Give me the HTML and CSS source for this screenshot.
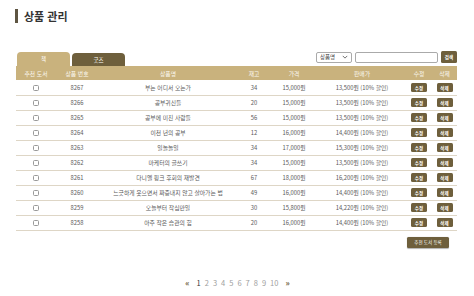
FILE: index.html
```html
<!DOCTYPE html>
<html lang="ko">
<head>
<meta charset="utf-8">
<title>상품 관리</title>
<link rel="stylesheet" href="styles.css">
</head>
<body>
<div class="page">
  <h1 class="title">상품 관리</h1>
  <div class="toolbar">
    <div class="tabs">
      <span class="tab tab-on">책</span>
      <span class="tab tab-off">굿즈</span>
    </div>
    <div class="search">
      <div class="select"><span>상품명</span><svg class="chev" viewBox="0 0 8 5" width="6" height="4"><path d="M1 1 L4 4 L7 1" fill="none" stroke="#444" stroke-width="1"/></svg></div>
      <div class="input"></div>
      <span class="btn btn-search">검색</span>
    </div>
  </div>
  <table class="grid">
    <colgroup>
      <col class="c1"><col class="c2"><col class="c3"><col class="c4"><col class="c5"><col class="c6"><col class="c7"><col class="c8">
    </colgroup>
    <thead>
      <tr><th>추천 도서</th><th>상품 번호</th><th>상품명</th><th>재고</th><th>가격</th><th>판매가</th><th>수정</th><th>삭제</th></tr>
    </thead>
    <tbody>
      <tr><td><span class="cb"></span></td><td>8267</td><td>부는 어디서 오는가</td><td>34</td><td>15,000원</td><td>13,500원 (10% 할인)</td><td><span class="btn">수정</span></td><td><span class="btn">삭제</span></td></tr>
      <tr><td><span class="cb"></span></td><td>8266</td><td>공부귀신들</td><td>20</td><td>15,000원</td><td>13,500원 (10% 할인)</td><td><span class="btn">수정</span></td><td><span class="btn">삭제</span></td></tr>
      <tr><td><span class="cb"></span></td><td>8265</td><td>공부에 미친 사람들</td><td>56</td><td>15,000원</td><td>13,500원 (10% 할인)</td><td><span class="btn">수정</span></td><td><span class="btn">삭제</span></td></tr>
      <tr><td><span class="cb"></span></td><td>8264</td><td>이천 년의 공부</td><td>12</td><td>16,000원</td><td>14,400원 (10% 할인)</td><td><span class="btn">수정</span></td><td><span class="btn">삭제</span></td></tr>
      <tr><td><span class="cb"></span></td><td>8263</td><td>일놀놀일</td><td>34</td><td>17,000원</td><td>15,300원 (10% 할인)</td><td><span class="btn">수정</span></td><td><span class="btn">삭제</span></td></tr>
      <tr><td><span class="cb"></span></td><td>8262</td><td>마케터의 글쓰기</td><td>34</td><td>15,000원</td><td>13,500원 (10% 할인)</td><td><span class="btn">수정</span></td><td><span class="btn">삭제</span></td></tr>
      <tr><td><span class="cb"></span></td><td>8261</td><td>다니엘 핑크 후회의 재발견</td><td>67</td><td>18,000원</td><td>16,200원 (10% 할인)</td><td><span class="btn">수정</span></td><td><span class="btn">삭제</span></td></tr>
      <tr><td><span class="cb"></span></td><td>8260</td><td>느긋하게 웃으면서 짜증내지 않고 살아가는 법</td><td>49</td><td>16,000원</td><td>14,400원 (10% 할인)</td><td><span class="btn">수정</span></td><td><span class="btn">삭제</span></td></tr>
      <tr><td><span class="cb"></span></td><td>8259</td><td>오늘부터 작심만일</td><td>30</td><td>15,800원</td><td>14,220원 (10% 할인)</td><td><span class="btn">수정</span></td><td><span class="btn">삭제</span></td></tr>
      <tr><td><span class="cb"></span></td><td>8258</td><td>아주 작은 습관의 힘</td><td>20</td><td>16,000원</td><td>14,400원 (10% 할인)</td><td><span class="btn">수정</span></td><td><span class="btn">삭제</span></td></tr>
    </tbody>
  </table>
  <div class="actions"><span class="btn btn-wide">추천 도서 등록</span></div>
  <div class="pager">
    <span class="arrow">«</span>
    <span class="pg pg-on">1</span><span class="pg">2</span><span class="pg">3</span><span class="pg">4</span><span class="pg">5</span><span class="pg">6</span><span class="pg">7</span><span class="pg">8</span><span class="pg">9</span><span class="pg">10</span>
    <span class="arrow">»</span>
  </div>
</div>
</body>
</html>
```

FILE: styles.css
```css
* { box-sizing: border-box; }
html, body { margin: 0; padding: 0; background: #fff; }
body {
  font-family: "Noto Sans CJK KR", "Noto Sans", sans-serif;
  color: #555;
  width: 474px;
  height: 296px;
  overflow: hidden;
}
.page { padding: 9px 17px 0 16px; }
.title {
  margin: 0;
  font-size: 11px;
  line-height: 14px;
  font-weight: 700;
  color: #333;
  border-left: 3px solid #5e5542;
  padding-left: 6px;
  margin-left: -1px;
  height: 14px;
  display: flex;
  align-items: center;
}
.toolbar {
  margin-top: 29px;
  display: flex;
  justify-content: space-between;
  align-items: flex-end;
  height: 14px;
}
.tabs { display: flex; gap: 2px; align-items: flex-end; padding-left: 1px; }
.tab {
  width: 53px;
  height: 14px;
  border-radius: 4px 4px 0 0;
  color: #fff;
  font-size: 5.5px;
  display: flex;
  align-items: center;
  justify-content: center;
}
.tab-on { background: #c9b27d; }
.tab-off { background: #6e5f3c; height: 13px; }
.search { display: flex; align-items: center; align-self: flex-start; margin-top: -1px; }
.select {
  width: 36px;
  height: 11px;
  border: 1px solid #aaa;
  border-radius: 2px;
  font-size: 5.5px;
  color: #444;
  display: flex;
  align-items: center;
  justify-content: space-between;
  padding: 0 3px 0 3px;
}
.chev { display: block; }
.input {
  width: 83px;
  height: 11px;
  border: 1px solid #aaa;
  border-radius: 2px;
  margin-left: 3px;
}
.btn {
  display: inline-flex;
  align-items: center;
  justify-content: center;
  width: 16px;
  height: 9px;
  background: #6e5f3c;
  color: #fff;
  font-size: 4.5px;
  font-weight: 700;
  border-radius: 1.5px;
}
.btn-search { width: 16px; height: 12px; margin-left: 3px; }
.grid {
  width: 441px;
  border-collapse: collapse;
  table-layout: fixed;
}
.c1 { width: 40px; } .c2 { width: 42px; } .c3 { width: 140px; } .c4 { width: 32px; }
.c5 { width: 48px; } .c6 { width: 88px; } .c7 { width: 26px; } .c8 { width: 25px; }
.grid th {
  background: #c9b27d;
  color: #fbf8f0;
  font-weight: 400;
  font-size: 5.8px;
  height: 14px;
  padding: 0;
  text-align: center;
}
.grid td {
  height: 15px;
  padding: 0;
  text-align: center;
  font-size: 5.8px;
  color: #5a5a5a;
  border-bottom: 1px solid #ded6c6;
  white-space: nowrap;
}
.grid td .btn { vertical-align: middle; }
.cb {
  display: inline-block;
  width: 6px;
  height: 6px;
  border: 1px solid #999;
  border-radius: 1.5px;
  vertical-align: middle;
}
.actions { display: flex; justify-content: flex-end; padding-top: 6px; padding-right: 8px; }
.btn-wide { width: 42px; height: 11px; font-size: 4.5px; font-weight: 400; box-shadow: 0 0.5px 1px rgba(0,0,0,0.3); }
.pager {
  margin-top: 29px;
  display: flex;
  justify-content: center;
  align-items: center;
  gap: 4px;
  font-size: 7.5px;
  line-height: 11px;
  color: #a0a0a0;
  padding-left: 2px;
}
.pg-on { color: #333; }
.arrow { color: #6e5f3c; font-weight: 700; padding: 0 3px; font-size: 8px; }
```
